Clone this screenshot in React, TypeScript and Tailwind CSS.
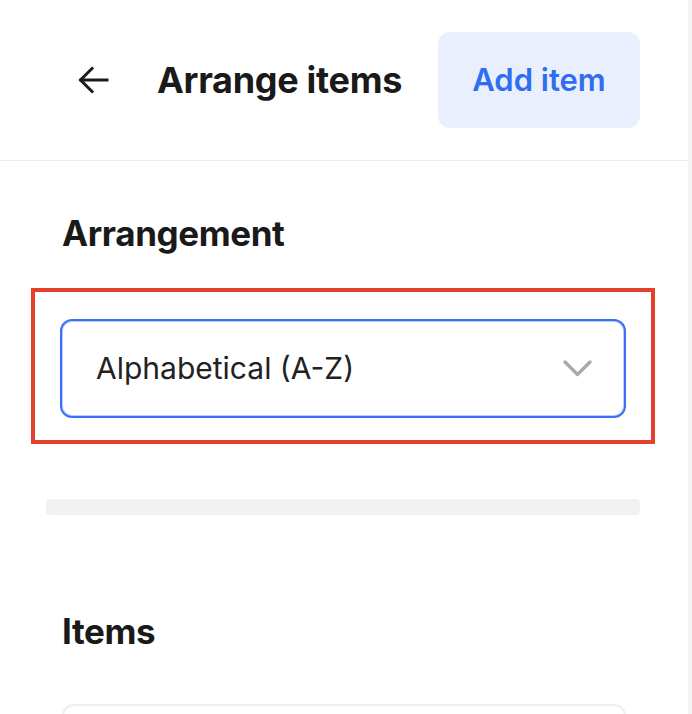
import React from 'react';

const BackArrow = () => (
  <svg width="32" height="30" viewBox="0 0 32 30" fill="none" stroke="#1a1a1a" strokeWidth="3" strokeLinecap="square">
    <path d="M30 15H4" />
    <path d="M15 3.5L3.5 15L15 26.5" />
  </svg>
);

const Chevron = () => (
  <svg width="29" height="17" viewBox="0 0 29 17" fill="none" stroke="#a9a9a9" strokeWidth="3.2" strokeLinecap="round" strokeLinejoin="round">
    <path d="M2 2L14.5 14.5L27 2" />
  </svg>
);

export default function App() {
  return (
    <div className="flex h-[714px] w-[692px] overflow-hidden bg-white font-['Inter',sans-serif] text-[#1a1a1a]">
      <div className="flex w-[688px] flex-col">
        {/* header */}
        <div className="flex h-[161px] shrink-0 items-center border-b border-[#ececec] pl-[77px] pr-[48px]">
          <BackArrow />
          <h1 className="ml-[48px] text-[36px] font-bold leading-none tracking-[-0.3px]">Arrange items</h1>
          <button className="ml-auto h-[96px] w-[202px] rounded-[12px] bg-[#e9effc] text-[31px] font-semibold text-[#2f6df2]">
            Add item
          </button>
        </div>

        {/* arrangement */}
        <div className="pt-[55px]">
          <h2 className="pl-[62px] text-[35px] font-bold leading-none tracking-[-0.4px]">Arrangement</h2>
          <div className="ml-[31px] mt-[37px] w-[624px] border-4 border-[#e5402a] px-[25px] pb-[22px] pt-[27px]">
            <div className="flex h-[99px] items-center rounded-[12px] border-2 border-[#3b6ff5] pl-[34px] pr-[32px] shadow-[inset_0_0_0_1px_#b9cdfb]">
              <span className="text-[30px] text-[#222]">Alphabetical (A-Z)</span>
              <span className="ml-auto"><Chevron /></span>
            </div>
          </div>
          <div className="ml-[46px] mt-[55px] h-[16px] w-[594px] rounded-[4px] bg-[#f1f1f1]" />
        </div>

        {/* items */}
        <div className="pt-[99px]">
          <h2 className="pl-[62px] text-[35px] font-bold leading-none tracking-[-0.4px]">Items</h2>
          <div className="ml-[62px] mt-[55px] h-[60px] w-[564px] shrink-0 rounded-[12px] border-2 border-[#eeeeee]" />
        </div>
      </div>
      <div className="w-[4px] bg-[#f3f3f3]" />
    </div>
  );
}
